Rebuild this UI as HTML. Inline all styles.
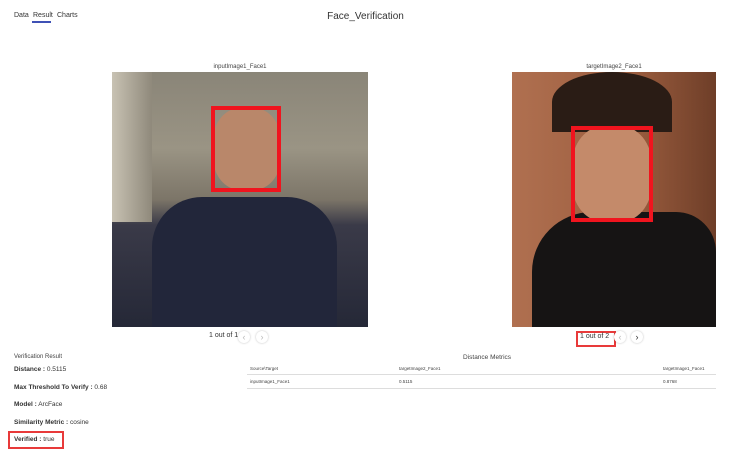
<!DOCTYPE html>
<html><head><style>
body{margin:0;width:731px;height:451px;background:#fff;font-family:"Liberation Sans",sans-serif;position:relative;overflow:hidden;color:#333}
.a{position:absolute;white-space:nowrap}
.s{font-size:6px;color:#444}
.b{font-size:6.5px;color:#333}
.b b{font-weight:bold}
.c{width:12px;height:12px;border-radius:50%;background:#fff;box-shadow:0 0 2px rgba(0,0,0,.25);font-size:9px;text-align:center;line-height:12px;color:#bbb}
</style></head><body>
<div class="a" style="left:14px;top:12px;font-size:7px">Data</div>
<div class="a" style="left:33px;top:12px;font-size:7px">Result</div>
<div class="a" style="left:32px;top:21px;width:19px;height:2px;background:#3f51b5"></div>
<div class="a" style="left:57px;top:12px;font-size:7px">Charts</div>
<div class="a" style="left:0;width:731px;top:11px;text-align:center;font-size:10px;color:#333">Face_Verification</div>

<div class="a s" style="left:112px;width:256px;top:64px;text-align:center">inputImage1_Face1</div>
<div class="a" style="left:112px;top:72px;width:256px;height:255px;background:linear-gradient(180deg,#8a8578 0%,#9a9484 30%,#7c7568 50%,#3a3a48 60%,#252837 100%)">
 <div class="a" style="left:0;top:0;width:40px;height:150px;background:linear-gradient(90deg,#c8c2b3,#8f897b)"></div>
 <div class="a" style="left:40px;top:125px;width:185px;height:130px;background:#22263a;border-radius:50px 50px 0 0"></div>
 <div class="a" style="left:101px;top:36px;width:68px;height:82px;background:#b9876a;border-radius:40%"></div>
 <div class="a" style="left:99px;top:34px;width:62px;height:78px;border:4px solid #f0141e"></div>
</div>
<div class="a" style="left:209px;top:332px;font-size:7px">1 out of 1</div>
<div class="a c" style="left:238px;top:331px">‹</div>
<div class="a c" style="left:256px;top:331px">›</div>

<div class="a s" style="left:512px;width:204px;top:64px;text-align:center">targetImage2_Face1</div>
<div class="a" style="left:512px;top:72px;width:204px;height:255px;background:linear-gradient(90deg,#b07050,#9a5c3e 60%,#6e3e28)">
 <div class="a" style="left:40px;top:0;width:120px;height:60px;background:#2a1c15;border-radius:50% 50% 0 0"></div>
 <div class="a" style="left:20px;top:140px;width:184px;height:115px;background:#161414;border-radius:60px 40px 0 0"></div>
 <div class="a" style="left:60px;top:54px;width:80px;height:96px;background:#c48a6a;border-radius:40%"></div>
 <div class="a" style="left:59px;top:54px;width:74px;height:88px;border:4px solid #f0141e"></div>
</div>
<div class="a" style="left:576px;top:331px;width:36px;height:12px;border:2px solid #e83a3a"></div>
<div class="a" style="left:580px;top:333px;font-size:7px">1 out of 2</div>
<div class="a c" style="left:614px;top:331px">‹</div>
<div class="a c" style="left:631px;top:331px;color:#333">›</div>

<div class="a s" style="left:14px;top:354px">Verification Result</div>
<div class="a b" style="left:14px;top:366px"><b>Distance :</b> 0.5115</div>
<div class="a b" style="left:14px;top:384px"><b>Max Threshold To Verify :</b> 0.68</div>
<div class="a b" style="left:14px;top:401px"><b>Model :</b> ArcFace</div>
<div class="a b" style="left:14px;top:419px"><b>Similarity Metric :</b> cosine</div>
<div class="a" style="left:8px;top:431px;width:52px;height:14px;border:2px solid #e83a3a"></div>
<div class="a b" style="left:14px;top:436px"><b>Verified :</b> true</div>

<div class="a s" style="left:463px;top:354px;font-size:6.5px">Distance Metrics</div>
<div class="a" style="left:247px;top:374px;width:469px;height:1px;background:#ddd"></div>
<div class="a" style="left:247px;top:388px;width:469px;height:1px;background:#ddd"></div>
<div class="a s" style="left:250px;top:366px;font-size:4.5px">Source\Target</div>
<div class="a s" style="left:399px;top:366px;font-size:4.5px">targetImage2_Face1</div>
<div class="a s" style="left:663px;top:366px;font-size:4.5px">targetImage1_Face1</div>
<div class="a s" style="left:250px;top:379px;font-size:4.5px">inputImage1_Face1</div>
<div class="a s" style="left:399px;top:379px;font-size:4.5px">0.5115</div>
<div class="a s" style="left:663px;top:379px;font-size:4.5px">0.8768</div>
</body></html>
